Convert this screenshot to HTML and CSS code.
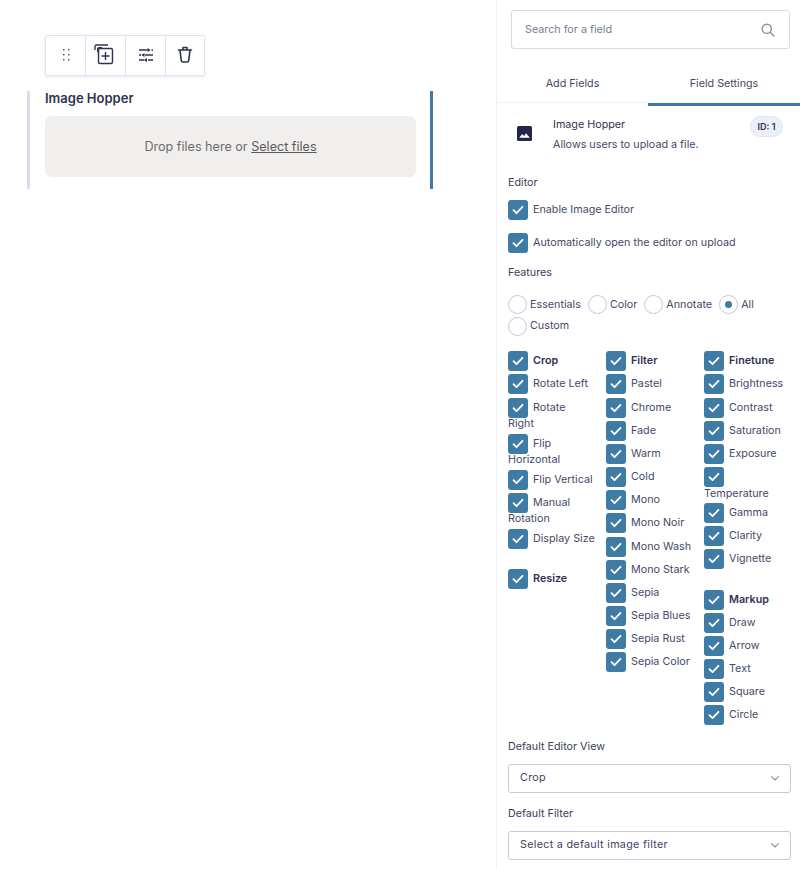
FILE: index.html
```html
<!DOCTYPE html>
<html lang="en">
<head>
<meta charset="utf-8">
<title>Image Hopper field settings</title>
<link rel="stylesheet" href="styles.css">
</head>
<body>
<svg class="sprite" width="0" height="0" aria-hidden="true">
  <symbol id="check" viewBox="0 0 20 20"><path d="M5.500 10.200l3 3 6-6.400" fill="none" stroke="#fff" stroke-width="1.800" stroke-linecap="round" stroke-linejoin="round"/></symbol>
  <symbol id="chev" viewBox="0 0 8 5"><path d="M.7.700L4 4l3.300-3.300" fill="none" stroke="#8c8fa8" stroke-width="1.100" stroke-linecap="round" stroke-linejoin="round"/></symbol>
</svg>
<main class="canvas">
  <div class="toolbar">
    <div class="tool">
      <svg width="20" height="20" viewBox="0 0 20 20"><g fill="#55587a"><rect x="7" y="4" width="1.500" height="1.500"/><rect x="12" y="4" width="1.500" height="1.500"/><rect x="7" y="9" width="1.500" height="1.500"/><rect x="12" y="9" width="1.500" height="1.500"/><rect x="7" y="14" width="1.500" height="1.500"/><rect x="12" y="14" width="1.500" height="1.500"/></g></svg>
    </div>
    <div class="tool tool-copy">
      <svg width="22" height="22" viewBox="0 0 22 22" fill="none" stroke="#2f3250" stroke-width="1.400"><path d="M2 7V3.500A1.500 1.500 0 0 1 3.500 2H15"/><path d="M4.700 9V5.800A1 1 0 0 1 5.700 4.800H9"/><rect x="5.500" y="5.500" width="14" height="15" rx="1.500"/><path d="M12.500 9v8M8.500 13h8"/></svg>
    </div>
    <div class="tool">
      <svg width="20" height="20" viewBox="0 0 20 20" fill="none" stroke="#2f3250" stroke-width="1.300"><path d="M3 5h8.500M15.500 5H17M3 10h2M9 10h8M3 15h5M12 15h5"/><path d="M11.500 3v4l3.200-2zM8.500 8v4l-3.200-2zM11 13v4l-3.200-2z" fill="#2f3250" stroke="none"/></svg>
    </div>
    <div class="tool">
      <svg width="20" height="20" viewBox="0 0 20 20" fill="none" stroke="#2f3250" stroke-width="1.600" stroke-linejoin="round" stroke-linecap="round"><path d="M3.500 5h13M8 5V2.500h4V5"/><path d="M5 5.500l1.300 10.200a1.500 1.500 0 0 0 1.500 1.300h4.400a1.500 1.500 0 0 0 1.500-1.300L15 5.500"/></svg>
    </div>
  </div>
  <section class="field">
    <h2 class="field-title">Image Hopper</h2>
    <div class="dropzone">Drop files here or <span class="select-link">Select files</span></div>
  </section>
</main>

<aside class="sidebar">
  <div class="search-wrap">
    <div class="search">
      <span class="search-text">Search for a field</span>
      <svg width="14" height="14" viewBox="0 0 14 14" fill="none" stroke="#8a8da8" stroke-width="1.400" stroke-linecap="round"><circle cx="5.800" cy="5.800" r="4.600"/><path d="M9.200 9.200L13 13"/></svg>
    </div>
  </div>
  <nav class="tabs">
    <div class="tab">Add Fields</div>
    <div class="tab active">Field Settings</div>
  </nav>
  <div class="field-head">
    <svg class="field-icon" width="15" height="15" viewBox="0 0 15 15"><rect width="15" height="15" rx="1.500" fill="#23264a"/><path d="M2.200 11.800l3-3.800 1.900 2.100 2-2.900 3.700 4.600z" fill="#fff"/></svg>
    <div class="field-meta">
      <div class="field-name">Image Hopper</div>
      <div class="field-desc">Allows users to upload a file.</div>
    </div>
    <span class="badge">ID: 1</span>
  </div>
  <div class="settings">
    <div class="label label-editor">Editor</div>
    <div class="option-row option-first"><span class="box"><svg><use href="#check"/></svg></span>Enable Image Editor</div>
    <div class="option-row"><span class="box"><svg><use href="#check"/></svg></span>Automatically open the editor on upload</div>
    <div class="label label-features">Features</div>
    <div class="radios">
      <span class="radio-item"><span class="radio"></span>Essentials</span>
      <span class="radio-item"><span class="radio"></span>Color</span>
      <span class="radio-item"><span class="radio"></span>Annotate</span>
      <span class="radio-item"><span class="radio on"></span>All</span>
      <span class="radio-item"><span class="radio"></span>Custom</span>
    </div>
    <div class="columns">
      <div class="col">
        <div class="check bold"><span class="box"><svg><use href="#check"/></svg></span>Crop</div>
        <div class="check"><span class="box"><svg><use href="#check"/></svg></span>Rotate Left</div>
        <div class="check"><span class="box"><svg><use href="#check"/></svg></span>Rotate<br>Right</div>
        <div class="check"><span class="box"><svg><use href="#check"/></svg></span>Flip Horizontal</div>
        <div class="check"><span class="box"><svg><use href="#check"/></svg></span>Flip Vertical</div>
        <div class="check"><span class="box"><svg><use href="#check"/></svg></span>Manual Rotation</div>
        <div class="check"><span class="box"><svg><use href="#check"/></svg></span>Display Size</div>
        <div class="check bold group-start"><span class="box"><svg><use href="#check"/></svg></span>Resize</div>
      </div>
      <div class="col">
        <div class="check bold"><span class="box"><svg><use href="#check"/></svg></span>Filter</div>
        <div class="check"><span class="box"><svg><use href="#check"/></svg></span>Pastel</div>
        <div class="check"><span class="box"><svg><use href="#check"/></svg></span>Chrome</div>
        <div class="check"><span class="box"><svg><use href="#check"/></svg></span>Fade</div>
        <div class="check"><span class="box"><svg><use href="#check"/></svg></span>Warm</div>
        <div class="check"><span class="box"><svg><use href="#check"/></svg></span>Cold</div>
        <div class="check"><span class="box"><svg><use href="#check"/></svg></span>Mono</div>
        <div class="check"><span class="box"><svg><use href="#check"/></svg></span>Mono Noir</div>
        <div class="check"><span class="box"><svg><use href="#check"/></svg></span>Mono Wash</div>
        <div class="check"><span class="box"><svg><use href="#check"/></svg></span>Mono Stark</div>
        <div class="check"><span class="box"><svg><use href="#check"/></svg></span>Sepia</div>
        <div class="check"><span class="box"><svg><use href="#check"/></svg></span>Sepia Blues</div>
        <div class="check"><span class="box"><svg><use href="#check"/></svg></span>Sepia Rust</div>
        <div class="check"><span class="box"><svg><use href="#check"/></svg></span>Sepia Color</div>
      </div>
      <div class="col">
        <div class="check bold"><span class="box"><svg><use href="#check"/></svg></span>Finetune</div>
        <div class="check"><span class="box"><svg><use href="#check"/></svg></span>Brightness</div>
        <div class="check"><span class="box"><svg><use href="#check"/></svg></span>Contrast</div>
        <div class="check"><span class="box"><svg><use href="#check"/></svg></span>Saturation</div>
        <div class="check"><span class="box"><svg><use href="#check"/></svg></span>Exposure</div>
        <div class="check"><span class="box"><svg><use href="#check"/></svg></span>Temperature</div>
        <div class="check"><span class="box"><svg><use href="#check"/></svg></span>Gamma</div>
        <div class="check"><span class="box"><svg><use href="#check"/></svg></span>Clarity</div>
        <div class="check"><span class="box"><svg><use href="#check"/></svg></span>Vignette</div>
        <div class="check bold group-start"><span class="box"><svg><use href="#check"/></svg></span>Markup</div>
        <div class="check"><span class="box"><svg><use href="#check"/></svg></span>Draw</div>
        <div class="check"><span class="box"><svg><use href="#check"/></svg></span>Arrow</div>
        <div class="check"><span class="box"><svg><use href="#check"/></svg></span>Text</div>
        <div class="check"><span class="box"><svg><use href="#check"/></svg></span>Square</div>
        <div class="check"><span class="box"><svg><use href="#check"/></svg></span>Circle</div>
      </div>
    </div>
    <div class="label label-view">Default Editor View</div>
    <div class="select"><span class="select-text">Crop</span><svg width="8" height="5"><use href="#chev"/></svg></div>
    <div class="label label-filter">Default Filter</div>
    <div class="select"><span class="select-text">Select a default image filter</span><svg width="8" height="5"><use href="#chev"/></svg></div>
  </div>
</aside>
</body>
</html>
```

FILE: styles.css
```css
* { box-sizing: border-box; }
html, body { margin: 0; padding: 0; height: 100%; }
body {
  display: flex;
  width: 800px;
  height: 869px;
  overflow: hidden;
  background: #fff;
  font-family: Inter, "Liberation Sans", sans-serif;
  font-size: 10.75px;
  line-height: 16.5px;
  color: #46496a;
}
.sprite { position: absolute; }

/* canvas */
.canvas { width: 496px; flex: none; padding: 35px 0 0 27px; }
.toolbar {
  display: flex;
  width: 160px;
  height: 41px;
  margin-left: 18px;
  background: #fff;
  border: 1px solid #e0e1f1;
  border-radius: 3px;
  box-shadow: 0 1px 4px rgba(47, 50, 100, .1);
}
.tool {
  flex: 0 0 40px;
  display: flex;
  align-items: center;
  justify-content: center;
  padding-bottom: 2px;
  border-left: 1px solid #dfe0f0;
}
.tool:first-child { flex-basis: 39px; border-left: 0; }
.tool:last-child { flex-basis: 39px; }
.tool-copy { padding: 0 3px 4px 0; }
.field {
  width: 406px;
  height: 98px;
  margin-top: 15px;
  padding: 0 14px 0 15px;
  border-left: 3px solid #d9dbef;
  border-right: 3px solid #3e7ca6;
}
.field-title {
  margin: 0;
  height: 25px;
  font-size: 13px;
  line-height: 15px;
  font-weight: 600;
  color: #2f3250;
}
.dropzone {
  height: 61px;
  display: flex;
  align-items: center;
  justify-content: center;
  padding-top: 2px;
  white-space: pre;
  border-radius: 7px;
  background: #f0efed;
  font-size: 12.6px;
  color: #6d6d70;
}
.select-link { text-decoration: underline; color: #5c5c60; }

/* sidebar */
.sidebar { width: 304px; flex: none; border-left: 1px solid #eeeef6; }
.search-wrap { padding: 10px 10px 0 14px; }
.search {
  height: 39px;
  display: flex;
  align-items: center;
  justify-content: space-between;
  padding: 0 14px 0 13px;
  border: 1px solid #d8d9ec;
  border-radius: 3px;
  color: #7a7d97;
}
.search-text { padding-top: 2px; }
.tabs { display: flex; align-items: flex-start; height: 57px; }
.tab {
  flex: 0 0 151px;
  height: 54px;
  padding-top: 27px;
  text-align: center;
  border-bottom: 1px solid #f0f0f7;
}
.tab.active { flex: 1; height: 57px; border-bottom: 3px solid #3e7ca6; }
.field-head { display: flex; align-items: flex-start; height: 60px; padding: 11px 17px 0 20px; }
.field-icon { margin-top: 9px; flex: none; }
.field-meta { margin-left: 21px; flex: 1; }
.field-name { color: #2f3250; margin-bottom: 3.500px; }
.badge {
  height: 21px;
  width: 33px;
  margin-top: -1px;
  border-radius: 11px;
  background: #eceef9;
  border: 1px solid #e3e4f3;
  font-size: 9px;
  font-weight: 600;
  line-height: 19px;
  text-align: center;
  color: #2f3250;
}
.settings { padding: 0 9px 0 11px; }
.label { color: #3a3d5c; }
.label-editor { margin-top: 9px; margin-bottom: 8.750px; }
.label-features { margin-top: 11.750px; margin-bottom: 13.750px; }
.label-view { margin-top: 10.800px; margin-bottom: 8px; }
.label-filter { margin-top: 13.500px; margin-bottom: 8px; }
.box {
  display: inline-block;
  flex: none;
  width: 20px;
  height: 20px;
  margin: -2px 5px -2px 0;
  border-radius: 3px;
  background: #3e7ca6;
  vertical-align: middle;
}
.box svg { display: block; width: 20px; height: 20px; }
.option-row { display: flex; align-items: center; height: 20px; }
.option-row .box { margin: 0 5px 0 0; }
.option-first { margin-bottom: 13px; }
.radios { display: flex; flex-wrap: wrap; width: 282px; column-gap: 7px; row-gap: 2.500px; }
.radio-item { display: flex; align-items: center; height: 19px; }
.radio {
  width: 19px;
  height: 19px;
  margin-right: 3px;
  border-radius: 50%;
  border: 1px solid #c5c7dc;
  background: #fff;
  position: relative;
}
.radio.on::after {
  content: "";
  position: absolute;
  left: 5px;
  top: 5px;
  width: 7px;
  height: 7px;
  border-radius: 50%;
  background: #3e7ca6;
}
.columns { display: flex; margin-top: 15.500px; }
.col { width: 98px; flex: none; padding-right: 9px; }
.check { min-height: 23.170px; padding: 2px 0 1px; }
.check.bold { font-weight: 600; color: #2f3250; }
.group-start { margin-top: 17px; }
.select {
  height: 29px;
  display: flex;
  align-items: center;
  justify-content: space-between;
  padding: 0 11px;
  border: 1px solid #c5c7dc;
  border-radius: 3px;
  letter-spacing: .3px;
  color: #3f4262;
}
.select-text { padding-top: 1px; }
```
